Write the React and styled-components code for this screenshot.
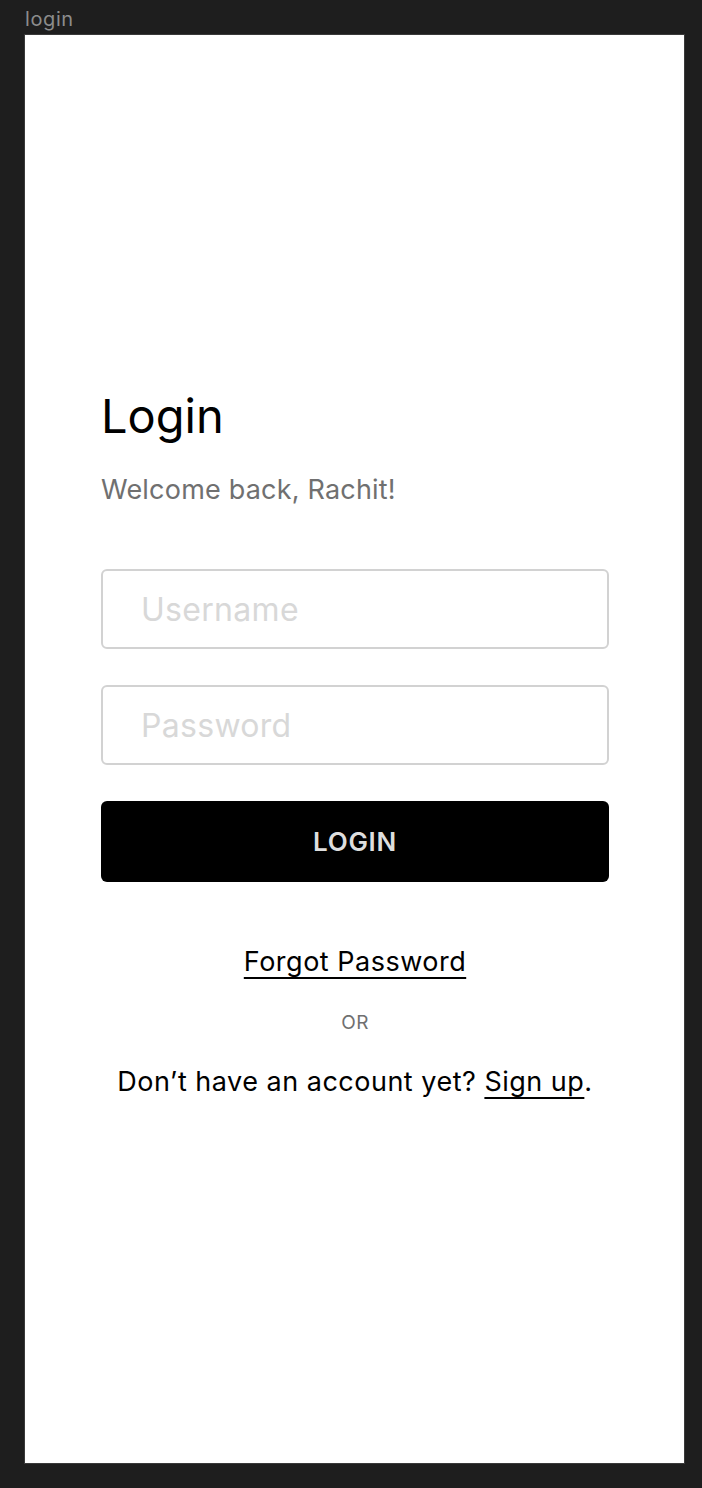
import React from 'react'
import styled, { createGlobalStyle } from 'styled-components'

const GlobalStyle = createGlobalStyle`
  html, body {
    margin: 0;
    padding: 0;
    background: #1e1e1e;
  }
  * {
    box-sizing: border-box;
  }
`

const Canvas = styled.div`
  width: 702px;
  height: 1488px;
  padding-left: 25px;
  font-family: Inter, "Noto Sans", "Liberation Sans", sans-serif;
`

const FrameLabel = styled.div`
  height: 35px;
  padding-top: 7px;
  font-size: 20px;
  line-height: 24px;
  letter-spacing: 0.6px;
  color: #8c8c8c;
`

const Frame = styled.div`
  width: 659px;
  height: 1428px;
  background: #ffffff;
  box-shadow: 0 0 0 1px #3a3a3a;
  display: flex;
  flex-direction: column;
  padding: 353px 75px 0 76px;
`

const Title = styled.h1`
  margin: 0;
  font-size: 47px;
  font-weight: 400;
  line-height: 56px;
  color: #000;
`

const Subtitle = styled.p`
  margin: 30px 0 0;
  font-size: 27px;
  line-height: 32px;
  letter-spacing: 0.2px;
  color: #707070;
`

const Form = styled.form`
  margin-top: 63px;
  display: flex;
  flex-direction: column;
  gap: 36px;
`

const Input = styled.input`
  width: 100%;
  height: 80px;
  border: 2px solid #d2d2d2;
  border-radius: 6px;
  padding: 0 0 0 38px;
  font-family: inherit;
  font-size: 32px;
  letter-spacing: 0.3px;
  color: #000;
  outline: none;
  &::placeholder {
    color: #d8d8d8;
  }
`

const Button = styled.button`
  width: 100%;
  height: 81px;
  border: none;
  border-radius: 6px;
  background: #000;
  color: #dedede;
  font-family: inherit;
  font-size: 26px;
  font-weight: 600;
  letter-spacing: 0.7px;
  cursor: pointer;
`

const Footer = styled.div`
  margin-top: 64px;
  display: flex;
  flex-direction: column;
  align-items: center;
`

const Link = styled.a`
  color: #000;
  text-decoration: underline;
  text-decoration-thickness: 2px;
  text-decoration-skip-ink: none;
  text-underline-offset: 6px;
`

const ForgotLink = styled(Link)`
  font-size: 27px;
  line-height: 32px;
  letter-spacing: 0.5px;
`

const Or = styled.div`
  margin-top: 33px;
  font-size: 19px;
  line-height: 24px;
  letter-spacing: 0.3px;
  color: #707070;
`

const SignupLine = styled.p`
  margin: 31px 0 0;
  font-size: 27px;
  line-height: 32px;
  letter-spacing: 0.5px;
  color: #000;
`

export default function App() {
  return (
    <>
      <GlobalStyle />
      <Canvas>
        <FrameLabel>login</FrameLabel>
        <Frame>
          <Title>Login</Title>
          <Subtitle>Welcome back, Rachit!</Subtitle>
          <Form onSubmit={(e) => e.preventDefault()}>
            <Input type="text" placeholder="Username" />
            <Input type="password" placeholder="Password" />
            <Button type="submit">LOGIN</Button>
          </Form>
          <Footer>
            <ForgotLink href="#">Forgot Password</ForgotLink>
            <Or>OR</Or>
            <SignupLine>
              Don’t have an account yet? <Link href="#">Sign up</Link>.
            </SignupLine>
          </Footer>
        </Frame>
      </Canvas>
    </>
  )
}
